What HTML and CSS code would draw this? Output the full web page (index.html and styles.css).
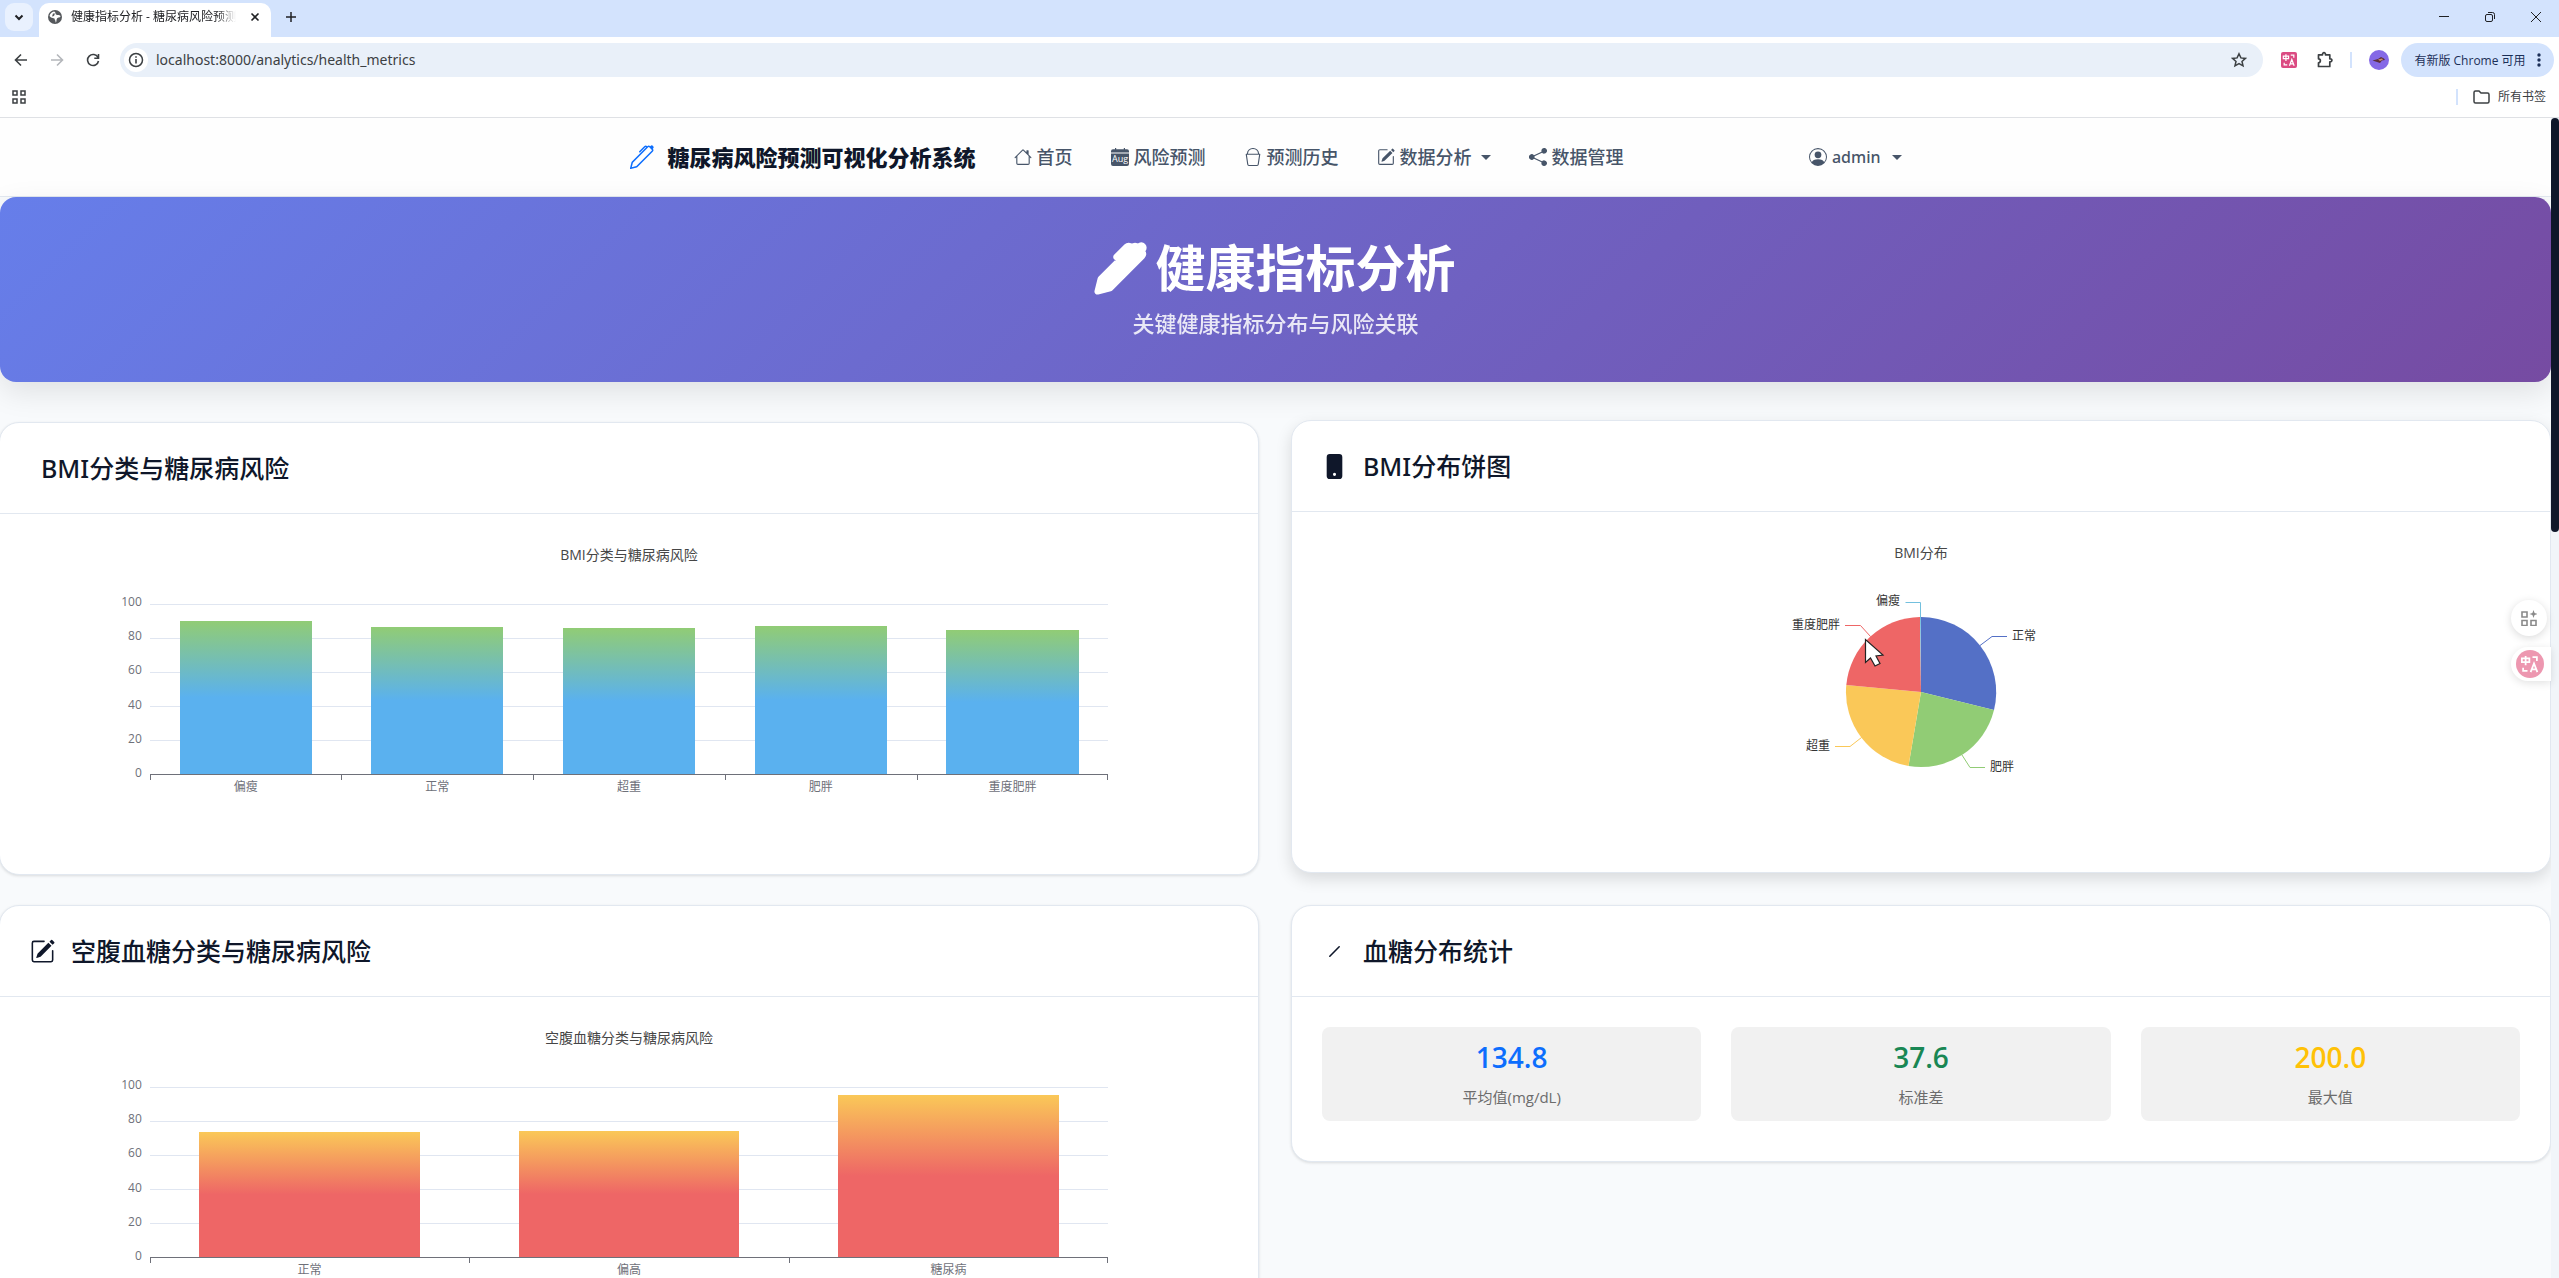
FILE: index.html
```html
<!DOCTYPE html>
<html lang="zh-CN">
<head>
<meta charset="utf-8">
<title>健康指标分析 - 糖尿病风险预测可视化分析系统</title>
<link rel="stylesheet" href="styles.css">
</head>
<body>
<svg class="defs" aria-hidden="true">
  <symbol id="pencil-square" viewBox="0 0 16 16"><path d="M15.502 1.94a.5.5 0 0 1 0 .706L14.459 3.69l-2-2L13.502.646a.5.5 0 0 1 .707 0l1.293 1.293zm-1.75 2.456-2-2L4.939 9.21a.5.5 0 0 0-.121.196l-.805 2.414a.25.25 0 0 0 .316.316l2.414-.805a.5.5 0 0 0 .196-.12l6.813-6.814z"/><path fill-rule="evenodd" d="M1 13.5A1.5 1.5 0 0 0 2.5 15h11a1.5 1.5 0 0 0 1.5-1.5v-6a.5.5 0 0 0-1 0v6a.5.5 0 0 1-.5.5h-11a.5.5 0 0 1-.5-.5v-11a.5.5 0 0 1 .5-.5H9a.5.5 0 0 0 0-1H2.5A1.5 1.5 0 0 0 1 2.5z"/></symbol>
  <symbol id="translate" viewBox="0 0 16 16"><path fill="none" stroke="currentColor" stroke-width="1.4" d="M1.5 3.500h6v3h-6zM4.500 1.500v7.500M10 2.500h3.500V5.500M2.500 11v2.500H6M8.500 14.500l2.700-7 2.700 7M9.500 12.300h3.500"/></symbol>
</svg>

<header class="browser">
  <div class="tabs">
    <button class="tab-search" aria-label="搜索标签页"><svg width="12" height="12" viewBox="0 0 12 12"><path class="line" stroke-width="2" d="M2.500 4.500 6 8l3.500-3.500"/></svg></button>
    <div class="tab">
      <svg width="14" height="14" viewBox="0 0 14 14"><circle cx="7" cy="7" r="7" fill="#55585c"/><path fill="#fff" d="M6 1.500C8 2 7 3.500 8 4.500s3-.5 4.500 1.500c0 2-2.500 1-3.500 2.500S9 12 7.500 12.500C8 10.500 6.500 10 6.500 8.500L3 7.500 1.500 6C2 3.500 4 1.800 6 1.500z"/><path fill="#55585c" d="M5 3.500h2L6 6 4 6.500z"/></svg>
      <span class="tab-title">健康指标分析 - 糖尿病风险预测</span>
      <button class="tab-close" aria-label="关闭"><svg width="10" height="10" viewBox="0 0 10 10"><path class="line" stroke-width="1.600" d="M1.500 1.500l7 7M8.500 1.500l-7 7"/></svg></button>
    </div>
    <button class="tab-new" aria-label="新标签页"><svg width="12" height="12" viewBox="0 0 12 12"><path class="line" stroke-width="1.500" d="M6 1v10M1 6h10"/></svg></button>
    <div class="window-controls">
      <button aria-label="最小化"><svg width="12" height="12" viewBox="0 0 12 12"><path class="line" d="M1 5.500h10"/></svg></button>
      <button aria-label="还原"><svg width="12" height="12" viewBox="0 0 12 12"><rect class="line" x="1.500" y="3.500" width="7" height="7" rx="1.500"/><path class="line" d="M4 1.500h4.500a2 2 0 0 1 2 2V8"/></svg></button>
      <button aria-label="关闭窗口"><svg width="12" height="12" viewBox="0 0 12 12"><path class="line" d="M1 1l10 10M11 1 1 11"/></svg></button>
    </div>
  </div>
  <div class="toolbar">
    <button class="tool" aria-label="后退"><svg width="14" height="14" viewBox="0 0 14 14"><path class="line" stroke-width="1.600" d="M13 7H2M7 1.500 1.500 7 7 12.500"/></svg></button>
    <button class="tool faded" aria-label="前进"><svg width="14" height="14" viewBox="0 0 14 14"><path class="line" stroke-width="1.600" d="M1 7h11M7 1.500 12.500 7 7 12.500"/></svg></button>
    <button class="tool" aria-label="重新加载"><svg width="14" height="14" viewBox="0 0 14 14"><path class="line" stroke-width="1.600" d="M12 4.500A5.500 5.500 0 1 0 12.500 8M12.500 1v4.200H8.300"/></svg></button>
    <form class="omnibox">
      <span class="site-info"><svg width="16" height="16" viewBox="0 0 16 16"><circle class="line" stroke-width="1.500" cx="8" cy="8" r="6.500"/><path class="line" stroke-width="1.600" d="M8 7v4.500M8 4.200v1.600"/></svg></span>
      <input class="address" aria-label="地址" value="localhost:8000/analytics/health_metrics">
      <svg width="16" height="16" viewBox="0 0 16 16"><path class="line" stroke-width="1.500" d="M8 1.800l1.900 4.100 4.500.5-3.400 3 1 4.400L8 11.500l-4 2.300 1-4.400-3.400-3 4.500-.5z"/></svg>
    </form>
    <span class="ext"><svg width="14" height="14"><use href="#translate"/></svg></span>
    <svg class="puzzle" width="18" height="18" viewBox="0 0 18 18"><path class="line" stroke-width="1.700" stroke-linejoin="round" d="M2.500 3.800h4c-.3-2.800 3.300-2.800 3 0h4.300v4c2.800-.2 2.800 3.200 0 3v4.700H2.500v-3.700c2.500 0 2.500-4 0-4z"/></svg>
    <span class="sep"></span>
    <svg class="avatar" width="20" height="20" viewBox="0 0 20 20"><circle cx="10" cy="10" r="10" fill="#8569e6"/><path fill="#5b2f3f" d="M3.500 10.500 9 9l3-2 3 1.500 1 1.500-3 .5-2 2.500-3-1z"/><path fill="#c98b72" d="M9 9.500l4-1 1 1-3 1.500z"/></svg>
    <button class="update">有新版 Chrome 可用<svg width="4" height="16" viewBox="0 0 4 16"><circle cx="2" cy="3" r="1.700"/><circle cx="2" cy="8" r="1.700"/><circle cx="2" cy="13" r="1.700"/></svg></button>
  </div>
  <div class="bookmarks">
    <svg width="14" height="14" viewBox="0 0 14 14"><path class="line" stroke-width="1.500" d="M1 1h4v4H1zM9 1h4v4H9zM1 9h4v4H1zM9 9h4v4H9z"/></svg>
    <span class="sep"></span>
    <button class="all-bookmarks"><svg width="17" height="14" viewBox="0 0 17 14"><path class="line" stroke-width="1.500" d="M1 2.500A1.500 1.500 0 0 1 2.500 1H6l2 2h6.500A1.500 1.500 0 0 1 16 4.500v7a1.500 1.500 0 0 1-1.500 1.500h-12A1.500 1.500 0 0 1 1 11.500z"/></svg>所有书签</button>
  </div>
</header>

<div class="viewport">
  <div class="page">
    <nav class="navbar">
      <div class="nav-inner">
        <a class="brand" href="#"><svg width="24" height="24" viewBox="0 0 16 16"><path d="m13.498.795.149-.149a1.207 1.207 0 1 1 1.707 1.708l-.149.148a1.500 1.500 0 0 1-.059 2.059L4.854 14.854a.5.5 0 0 1-.233.131l-4 1a.5.5 0 0 1-.606-.606l1-4a.5.5 0 0 1 .131-.232l9.642-9.642a.5.5 0 0 0-.642.056L6.854 4.854a.5.5 0 1 1-.708-.708L9.440.854A1.500 1.500 0 0 1 11.500.796a1.500 1.500 0 0 1 1.998-.001m-.644.766a.5.5 0 0 0-.707 0L1.950 11.756l-.764 3.057 3.057-.764L14.440 3.854a.5.5 0 0 0 0-.708z"/></svg>糖尿病风险预测可视化分析系统</a>
        <a class="nav-link" href="#"><svg width="18" height="18" viewBox="0 0 16 16"><path d="M8.707 1.500a1 1 0 0 0-1.414 0L.646 8.146a.5.5 0 0 0 .708.708L2 8.207V13.500A1.500 1.500 0 0 0 3.500 15h9a1.500 1.500 0 0 0 1.500-1.500V8.207l.646.647a.5.5 0 0 0 .708-.708L13 5.793V2.500a.5.5 0 0 0-.5-.5h-1a.5.5 0 0 0-.5.5v1.293zM13 7.207V13.500a.5.5 0 0 1-.5.5h-9a.5.5 0 0 1-.5-.5V7.207l5-5z"/></svg>首页</a>
        <a class="nav-link" href="#"><svg width="18" height="18" viewBox="0 0 18 18"><path d="M4 0h1.200v1.200h7.600V0H14v1.200h2a2 2 0 0 1 2 2V4.500H0V3.200a2 2 0 0 1 2-2h2zM0 5.600h18V16a2 2 0 0 1-2 2H2a2 2 0 0 1-2-2z"/><text class="cal-text" x="9" y="14">Aug</text></svg>风险预测</a>
        <a class="nav-link" href="#"><svg width="18" height="18" viewBox="0 0 16 16"><path d="M2.522 5H2a.5.5 0 0 0-.494.574l1.372 9.149A1.500 1.500 0 0 0 4.360 16h7.278a1.500 1.500 0 0 0 1.483-1.277l1.373-9.149A.5.5 0 0 0 14 5h-.522A5.500 5.500 0 0 0 2.522 5m1.005 0a4.500 4.500 0 0 1 8.945 0zm9.892 1-1.286 8.574a.5.5 0 0 1-.494.426H4.360a.5.5 0 0 1-.494-.426L2.580 6h10.838z"/></svg>预测历史</a>
        <a class="nav-link caret" href="#"><svg width="18" height="18"><use href="#pencil-square"/></svg>数据分析</a>
        <a class="nav-link" href="#"><svg width="18" height="18" viewBox="0 0 16 16"><path d="M11 2.500a2.500 2.500 0 1 1 .603 1.628l-6.718 3.120a2.500 2.500 0 0 1 0 1.504l6.718 3.120a2.500 2.500 0 1 1-.488.876l-6.718-3.120a2.500 2.500 0 1 1 0-3.256l6.718-3.120A2.500 2.500 0 0 1 11 2.500"/></svg>数据管理</a>
        <a class="nav-link caret user" href="#"><svg width="18" height="18" viewBox="0 0 16 16"><path d="M11 6a3 3 0 1 1-6 0 3 3 0 0 1 6 0"/><path fill-rule="evenodd" d="M0 8a8 8 0 1 1 16 0A8 8 0 0 1 0 8m8-7a7 7 0 0 0-5.468 11.370C3.242 11.226 4.805 10 8 10s4.757 1.225 5.468 2.370A7 7 0 0 0 8 1"/></svg>admin</a>
      </div>
    </nav>

    <section class="hero">
      <h1><svg width="50" height="50" viewBox="0 0 16 16"><path d="m13.498.795.149-.149a1.207 1.207 0 1 1 1.707 1.708l-.149.148a1.500 1.500 0 0 1-.059 2.059L4.854 14.854a.5.5 0 0 1-.233.131l-4 1a.5.5 0 0 1-.606-.606l1-4a.5.5 0 0 1 .131-.232l9.642-9.642a.5.5 0 0 0-.642.056L6.854 4.854a.5.5 0 1 1-.708-.708L9.440.854A1.500 1.500 0 0 1 11.500.796a1.500 1.500 0 0 1 1.998-.001"/></svg>健康指标分析</h1>
      <p>关键健康指标分布与风险关联</p>
    </section>

    <main class="cards">
      <article class="card">
        <h2 class="card-title"><span class="card-icon empty"></span>BMI分类与糖尿病风险</h2>
        <div class="card-body">
          <figure class="chart">
            <figcaption>BMI分类与糖尿病风险</figcaption>
            <div class="scale"><span>100</span><span>80</span><span>60</span><span>40</span><span>20</span><span>0</span></div>
            <div class="plot cool">
              <div class="band"><i style="height:89.8%"></i></div>
              <div class="band"><i style="height:86.5%"></i></div>
              <div class="band"><i style="height:85.9%"></i></div>
              <div class="band"><i style="height:87.3%"></i></div>
              <div class="band"><i style="height:84.9%"></i></div>
            </div>
            <div class="names"><span>偏瘦</span><span>正常</span><span>超重</span><span>肥胖</span><span>重度肥胖</span></div>
          </figure>
        </div>
      </article>

      <article class="card raised">
        <h2 class="card-title"><span class="card-icon"><svg width="25" height="25" viewBox="0 0 16 16"><path fill-rule="evenodd" d="M3 2a2 2 0 0 1 2-2h6a2 2 0 0 1 2 2v12a2 2 0 0 1-2 2H5a2 2 0 0 1-2-2zm6 11a1 1 0 1 0-2 0 1 1 0 0 0 2 0"/></svg></span>BMI分布饼图</h2>
        <div class="card-body">
          <svg class="pie" width="460" height="300" viewBox="0 0 460 300">
            <path fill="#5470c6" d="M230 150V75A75 75 0 0 1 303 168z"/>
            <path fill="#91cc75" d="M230 150 303 168A75 75 0 0 1 217.500 224z"/>
            <path fill="#fac858" d="M230 150 217.500 224A75 75 0 0 1 155.300 143z"/>
            <path fill="#ee6666" d="M230 150 155.300 143A75 75 0 0 1 229 75z"/>
            <path fill="#73c0de" d="M230 150 229 75H230z"/>
            <g fill="none">
              <path stroke="#5470c6" d="M289 103.500 301 94.500h15"/>
              <path stroke="#91cc75" d="M271 213l8 12.500h15"/>
              <path stroke="#fac858" d="M170.500 195.500 159 204.500h-15"/>
              <path stroke="#ee6666" d="M179.500 94.500 169.500 83.500h-15.500"/>
              <path stroke="#73c0de" d="M229.500 75V60.500h-15"/>
            </g>
            <text class="pie-title" x="230" y="16">BMI分布</text>
            <text class="pie-label" x="321" y="98">正常</text>
            <text class="pie-label" x="299" y="229">肥胖</text>
            <text class="pie-label" x="115" y="208">超重</text>
            <text class="pie-label" x="101" y="87">重度肥胖</text>
            <text class="pie-label" x="185" y="63">偏瘦</text>
            <path fill="#fff" stroke="#222" stroke-width="1.200" d="M174.500 97.500v23l5-4.500 4.500 8 5-2.500-4-7.500 7-1z"/>
          </svg>
        </div>
      </article>

      <article class="card">
        <h2 class="card-title"><span class="card-icon"><svg width="25" height="25"><use href="#pencil-square"/></svg></span>空腹血糖分类与糖尿病风险</h2>
        <div class="card-body">
          <figure class="chart">
            <figcaption>空腹血糖分类与糖尿病风险</figcaption>
            <div class="scale"><span>100</span><span>80</span><span>60</span><span>40</span><span>20</span><span>0</span></div>
            <div class="plot warm">
              <div class="band"><i style="height:73.5%"></i></div>
              <div class="band"><i style="height:74.1%"></i></div>
              <div class="band"><i style="height:95.2%"></i></div>
            </div>
            <div class="names"><span>正常</span><span>偏高</span><span>糖尿病</span></div>
          </figure>
        </div>
      </article>

      <article class="card stats-card">
        <h2 class="card-title"><span class="card-icon"><svg width="25" height="25" viewBox="0 0 16 16"><path d="M11.354 4.646a.5.5 0 0 1 0 .708l-6 6a.5.5 0 0 1-.708-.708l6-6a.5.5 0 0 1 .708 0"/></svg></span>血糖分布统计</h2>
        <div class="card-body stats">
          <div class="stat"><strong class="blue">134.8</strong><span>平均值(mg/dL)</span></div>
          <div class="stat"><strong class="green">37.6</strong><span>标准差</span></div>
          <div class="stat"><strong class="yellow">200.0</strong><span>最大值</span></div>
        </div>
      </article>
    </main>

    <div class="floaters">
      <button class="float-apps" aria-label="工具"><svg width="16" height="16" viewBox="0 0 16 16"><path fill="none" stroke="#8a8a8a" stroke-width="1.600" d="M1 2h5v5H1zM1 10.500h5v5H1zM10 10.500h5v5h-5z"/><path fill="#8a8a8a" d="M12.500 0l1.100 2.900 2.900 1.100-2.900 1.100-1.100 2.900-1.100-2.900L8.500 4l2.900-1.100z"/></svg></button>
      <button class="float-translate" aria-label="翻译"><span><svg width="20" height="20"><use href="#translate"/></svg></span></button>
    </div>
  </div>
  <div class="scrollbar"><div class="thumb"></div></div>
</div>
</body>
</html>
```
FILE: styles.css
```css
* { box-sizing: border-box; }

body {
  margin: 0;
  height: 100vh;
  display: flex;
  flex-direction: column;
  overflow: hidden;
  background: #f8fafc;
  font-family: "Open Sans", "Noto Sans CJK SC", sans-serif;
  color: #0f172a;
}

h1, h2, p, figure { margin: 0; }
svg { display: block; flex: none; fill: currentColor; }
button { border: 0; padding: 0; background: none; color: inherit; font: inherit; display: flex; align-items: center; justify-content: center; }
a { color: inherit; text-decoration: none; }
.defs { position: absolute; width: 0; height: 0; }
.line { fill: none; stroke: currentColor; }

/* Browser chrome */
.browser { flex: none; background: #fff; border-bottom: 1px solid #dfe1e5; color: #3c4043; font-size: 12px; }
.tabs { height: 37px; display: flex; align-items: flex-end; background: #d3e3fd; color: #202124; }
.tab-search { width: 28px; height: 28px; margin: 0 6px 6px 5px; border-radius: 9px; background: #e9f1fe; }
.tab { width: 232px; height: 34px; padding: 0 6px 6px 9px; display: flex; align-items: center; gap: 9px; background: #fff; border-radius: 10px 10px 0 0; }
.tab-title { flex: 1; overflow: hidden; white-space: nowrap; line-height: 20px; mask-image: linear-gradient(90deg, #000 88%, transparent); }
.tab-close { width: 20px; height: 20px; }
.tab-new { width: 28px; height: 28px; margin: 0 0 6px 6px; }
.window-controls { margin-left: auto; align-self: stretch; display: flex; }
.window-controls button { width: 46px; height: 34px; }

.toolbar { height: 46px; padding: 0 5px 0 3px; display: flex; align-items: center; }
.tool { width: 36px; height: 34px; }
.faded { color: #b4b7bb; }
.omnibox { flex: 1; height: 34px; margin: 0 18px 0 9px; padding: 0 16px 0 4px; display: flex; align-items: center; gap: 8px; border-radius: 17px; background: #e9f0f9; }
.site-info { width: 24px; height: 24px; display: grid; place-items: center; border-radius: 50%; background: #fff; }
.address { flex: 1; min-width: 0; border: 0; padding: 0; background: none; font: 14px/20px "Noto Sans", sans-serif; color: #3c4043; }
.ext { width: 16px; height: 16px; display: grid; place-items: center; border-radius: 2px; background: #db4b82; color: #fff; }
.puzzle { margin: 0 16px 0 19px; }
.sep { width: 2px; height: 16px; background: #d3e3fd; }
.avatar { margin: 0 12px 0 17px; }
.update { width: 153px; height: 34px; gap: 11px; border-radius: 17px; background: #d3e3fd; color: #1b2f57; white-space: nowrap; }
.bookmarks { height: 34px; padding: 0 13px 6px 12px; display: flex; align-items: center; }
.bookmarks .sep { margin: 0 15px 0 auto; }
.all-bookmarks { gap: 8px; line-height: 20px; }

/* Page and its scrollbar */
.viewport { flex: 1; min-height: 0; display: flex; }
.page { flex: 1; min-width: 0; overflow: hidden; }
.scrollbar { flex: none; width: 8px; background: #f1f5f9; }
.thumb { height: 35.7%; border-radius: 4px; background: #0f172a; }

.navbar { background: #fefefe; border-bottom: 1px solid #e2e8f0; }
.nav-inner { max-width: 1320px; height: 78px; margin: 0 auto; padding: 0 34px 0 14px; display: flex; align-items: center; gap: 38px; white-space: nowrap; }
.brand { display: flex; align-items: center; gap: 14px; font-size: 22px; line-height: 30px; font-weight: 800; }
.brand svg { color: #0d6efd; }
.nav-link { display: flex; align-items: center; gap: 5px; font-size: 18px; line-height: 26px; font-weight: 500; color: #475569; }
.caret::after { content: ""; margin-left: 4px; border: 5px solid transparent; border-top-color: currentColor; border-bottom: 0; }
.user { margin-left: auto; font-family: "Noto Sans", sans-serif; font-size: 16px; }
.user::after { margin-left: 6px; }
.cal-text { fill: #fff; font-size: 9px; text-anchor: middle; }

.hero { padding: 40px; border-radius: 16px; background: linear-gradient(135deg, #667eea, #764ba2); color: #fff; text-align: center; box-shadow: 0 10px 30px rgba(0, 0, 0, .1); }
.hero h1 { display: flex; justify-content: center; align-items: center; gap: 10px; font-size: 50px; line-height: 62px; font-weight: 700; }
.hero h1 svg { overflow: visible; stroke: currentColor; stroke-width: 1px; }
.hero p { margin: 8px 0 2px; font-size: 22px; line-height: 33px; font-weight: 500; opacity: .85; }

/* Cards; the left column runs one pixel past the window edge */
.cards { margin: 40px 0 0 -1px; display: grid; grid-template-columns: repeat(2, minmax(0, 1fr)); gap: 30px 32px; align-items: start; }
.card { border: 1px solid #e2e8f0; border-radius: 20px; background: #fff; box-shadow: 0 1px 3px rgba(0, 0, 0, .12); }
.raised { transform: translateY(-2px); box-shadow: 0 6px 16px rgba(0, 0, 0, .13); }
.card-title { height: 91px; padding: 0 30px; display: flex; align-items: center; border-bottom: 1px solid #e2e8f0; font-family: "Noto Sans", "Noto Sans CJK SC", sans-serif; font-size: 25px; line-height: 38px; font-weight: 500; }
.card-icon { width: 30px; margin-right: 11px; }
.empty { width: 0; }
.card-body { padding: 30px; }

/* Bar charts */
.chart { height: 300px; display: grid; grid-template-columns: 10% minmax(0, 1fr) 10%; grid-template-rows: 60px 171px 1fr; }
.chart figcaption { grid-column: 1 / -1; text-align: center; font-size: 14px; line-height: 22px; color: #464646; }
.scale { grid-column: 1; display: flex; flex-direction: column; justify-content: space-between; margin: -12px 0 -8px; padding-right: 8px; text-align: right; font-size: 12px; line-height: 20px; color: #6e7079; }
.plot { grid-column: 2; display: flex; align-items: stretch; border-bottom: 1px solid #6e7079; background: repeating-linear-gradient(#e0e6f1 0 1px, transparent 1px 34px); }
.band { flex: 1; display: flex; align-items: flex-end; justify-content: center; }
.band i { width: 69%; }
.cool i { background: linear-gradient(#91cc75, #5ab1ef 50%); }
.warm i { background: linear-gradient(#fac858, #ee6666 50%); }
.names { grid-column: 2; display: flex; font-size: 12px; line-height: 14px; color: #6e7079; }
.names span { flex: 1; padding-top: 5px; text-align: center; background: linear-gradient(#6e7079, #6e7079) 0 0 / 1px 5px no-repeat; }
.names span:last-child { background: linear-gradient(#6e7079, #6e7079) 0 0 / 1px 5px no-repeat, linear-gradient(#6e7079, #6e7079) 100% 0 / 1px 5px no-repeat; }

.pie { margin: 0 auto; }
.pie-title { font-size: 14px; text-anchor: middle; fill: #464646; }
.pie-label { font-size: 12px; fill: #333; }

/* Blood sugar figures */
.stats { display: grid; grid-template-columns: repeat(3, 1fr); gap: 30px; padding-bottom: 40px; }
.stat { padding: 12px; display: flex; flex-direction: column; gap: 10px; border-radius: 8px; background: #f1f1f1; text-align: center; }
.stat strong { font-size: 28px; line-height: 36px; font-weight: 600; }
.stat span { font-size: 15px; line-height: 24px; color: #6c6c6c; }
.blue { color: #0d6efd; }
.green { color: #198754; }
.yellow { color: #ffc107; }

/* Buttons that float over the right edge of the page */
.floaters { position: fixed; top: 600px; right: 8px; display: flex; flex-direction: column; align-items: flex-end; gap: 11px; }
.float-apps { width: 36px; height: 36px; margin-right: 4px; border-radius: 50%; background: #fff; box-shadow: 0 2px 8px rgba(0, 0, 0, .15); }
.float-translate { width: 40px; height: 34px; padding-right: 2px; border-radius: 17px 0 0 17px; background: #fff; box-shadow: 0 2px 8px rgba(0, 0, 0, .12); }
.float-translate span { width: 28px; height: 28px; display: grid; place-items: center; border-radius: 50%; background: #ed97b0; color: #fff; }
```
